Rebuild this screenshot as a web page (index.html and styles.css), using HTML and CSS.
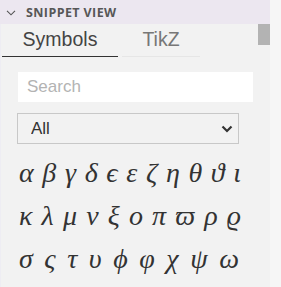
FILE: index.html
```html
<!DOCTYPE html>
<html>
<head>
<meta charset="utf-8">
<link rel="stylesheet" href="styles.css">
</head>
<body>
<div class="app">
  <div class="panel">
    <div class="header">
      <svg class="chev" width="10" height="6" viewBox="0 0 10 6"><path d="M1 0.8 L5 4.8 L9 0.8" fill="none" stroke="#555" stroke-width="1.1"/></svg>
      <span class="title">SNIPPET VIEW</span>
    </div>
    <div class="body">
      <div class="thumb"></div>
      <div class="tabs">
        <div class="tab active">Symbols</div>
        <div class="tab">TikZ</div>
      </div>
      <input class="search" type="text" placeholder="Search">
      <div class="select-wrap">
        <select class="select"><option>All</option></select>
        <svg class="select-arrow" width="12" height="8" viewBox="0 0 12 8"><path d="M1.5 1.5 L6 6 L10.5 1.5" fill="none" stroke="#333" stroke-width="2.2"/></svg>
      </div>
      <div class="symbols">
        <div class="row"><span>α</span><span>β</span><span>γ</span><span>δ</span><span>ϵ</span><span>ε</span><span>ζ</span><span>η</span><span>θ</span><span>ϑ</span><span>ι</span></div>
        <div class="row"><span>κ</span><span>λ</span><span>μ</span><span>ν</span><span>ξ</span><span>ο</span><span>π</span><span>ϖ</span><span>ρ</span><span>ϱ</span></div>
        <div class="row r3"><span>σ</span><span>ς</span><span>τ</span><span>υ</span><span>ϕ</span><span>φ</span><span>χ</span><span>ψ</span><span>ω</span></div>
      </div>
    </div>
  </div>
  <div class="strip"></div>
</div>
</body>
</html>
```
FILE: styles.css
```css
html, body {
  margin: 0;
  padding: 0;
  background: #f2f2f2;
  overflow: hidden;
}
.app {
  display: flex;
  width: 281px;
  height: 287px;
}
.panel {
  width: 270px;
  display: flex;
  flex-direction: column;
}
.strip {
  width: 11px;
  background: #f6f6f6;
}
.header {
  height: 24px;
  background: #ece7f0;
  display: flex;
  align-items: center;
  padding-left: 6px;
}
.chev {
  margin-top: 1px;
}
.title {
  margin-left: 10px;
  font-family: "Open Sans", sans-serif;
  font-weight: 700;
  font-size: 12.5px;
  letter-spacing: 0.4px;
  color: #575757;
}
.body {
  position: relative;
  flex: 1;
  border-left: 1px solid #eeedf3;
}
.thumb {
  position: absolute;
  right: 0;
  top: 0;
  width: 12px;
  height: 21px;
  background: #b3b3b3;
}
.tabs {
  display: flex;
  gap: 4px;
  padding-left: 1px;
}
.tab {
  height: 31px;
  display: flex;
  align-items: center;
  justify-content: center;
  font-family: "Liberation Sans", Arial, sans-serif;
  font-size: 19.5px;
  color: #777;
  border-bottom: 1px solid #e6e6e6;
  width: 78px;
  padding-bottom: 1px;
}
.tab.active {
  width: 116px;
  color: #444;
  border-bottom: 1.5px solid #333;
}
.search {
  display: block;
  box-sizing: border-box;
  margin: 15px 0 0 17px;
  width: 235px;
  height: 30px;
  border: none;
  outline: none;
  background: #fff;
  padding: 0 9px;
  font-family: "Liberation Sans", Arial, sans-serif;
  font-size: 17px;
  color: #333;
}
.search::placeholder {
  color: #b3b3b3;
}
.select-wrap {
  position: relative;
  margin: 11px 0 0 16px;
  width: 222px;
  height: 31px;
}
.select {
  appearance: none;
  -webkit-appearance: none;
  box-sizing: border-box;
  width: 222px;
  height: 31px;
  border: 1px solid #c8c8c8;
  border-radius: 0;
  background: #f2f2f2;
  padding: 0 0 0 13px;
  font-family: "Liberation Sans", Arial, sans-serif;
  font-size: 17px;
  color: #333;
  outline: none;
}
.select-arrow {
  position: absolute;
  right: 6px;
  top: 12px;
  pointer-events: none;
}
.symbols {
  margin-top: 7px;
  padding-left: 18px;
  width: 222px;
}
.row {
  display: flex;
  justify-content: space-between;
  height: 43px;
  line-height: 43px;
  font-family: "Liberation Serif", "DejaVu Serif", serif;
  font-style: italic;
  font-size: 28px;
  color: #333;
}
.row.r3 {
  width: 220px;
}
```
